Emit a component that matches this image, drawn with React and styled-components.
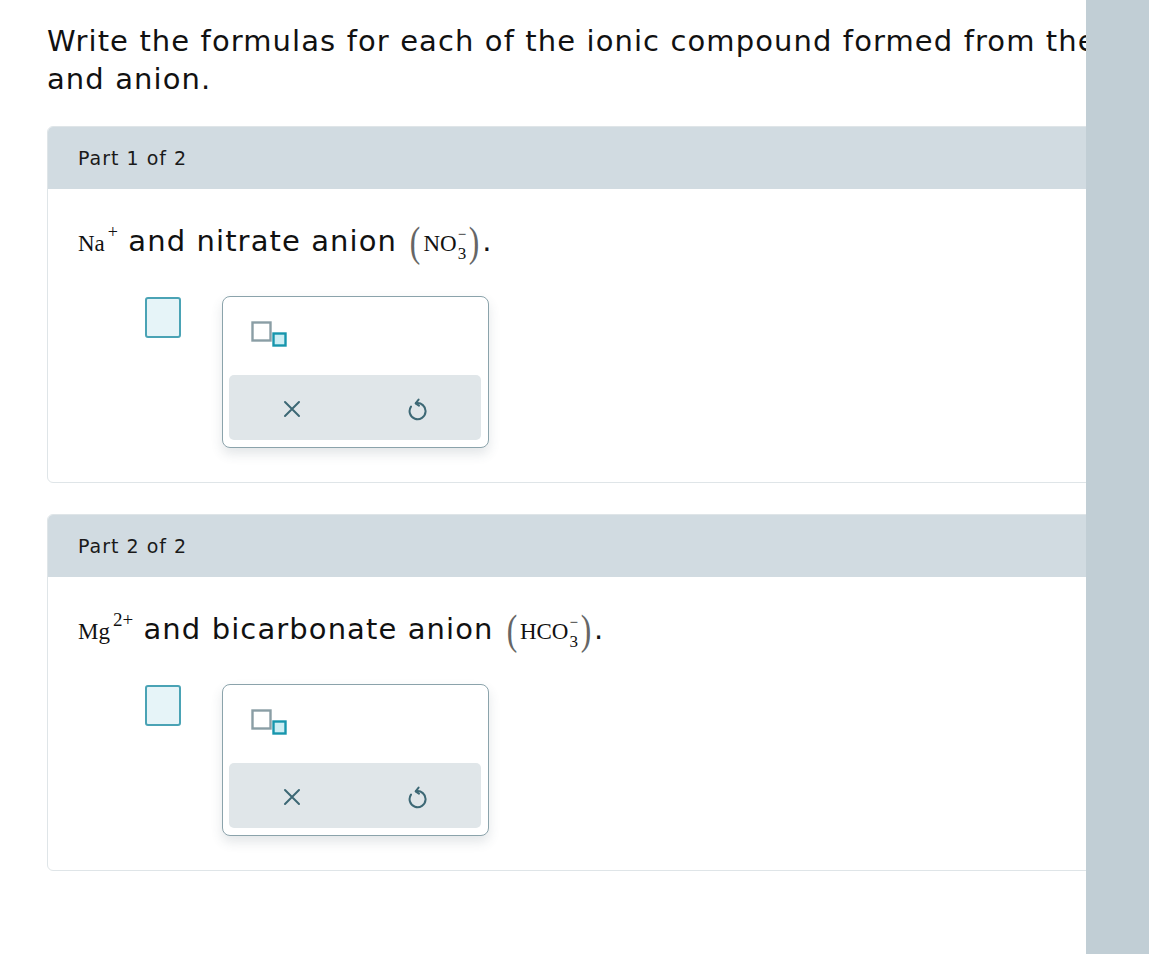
import styled, { createGlobalStyle } from "styled-components";

const GlobalStyle = createGlobalStyle`
    html, body {
        margin: 0;
        padding: 0;
        background: #fff;
    }
    body {
        font-family: "DejaVu Sans", Verdana, sans-serif;
        color: #111;
    }
`;

const parts = [
    { label: "Part 1 of 2", ion: "Na", charge: "+", name: "nitrate", formula: "NO" },
    { label: "Part 2 of 2", ion: "Mg", charge: "2+", name: "bicarbonate", formula: "HCO" },
];

function SubSquareIcon() {
    return (
        <svg width="37" height="27" viewBox="0 0 37 27">
            <rect x="1.5" y="1.5" width="18" height="18" fill="#fff" stroke="#8a9ea5" strokeWidth="2.4" />
            <rect x="22.5" y="12.5" width="12" height="12" fill="#cdeef4" stroke="#1796ad" strokeWidth="2.4" />
        </svg>
    );
}

function ClearIcon() {
    return (
        <svg width="20" height="20" viewBox="0 0 20 20">
            <path d="M3 3 L17 17 M17 3 L3 17" stroke="#3d6875" strokeWidth="2" strokeLinecap="round" />
        </svg>
    );
}

function UndoIcon() {
    return (
        <svg width="22" height="24" viewBox="0 0 22 24">
            <path d="M9 6.3 A8 8 0 1 1 4 9.6" fill="none" stroke="#3d6875" strokeWidth="2" strokeLinecap="round" />
            <path d="M11.6 2.6 L8.6 6.3 L12 8.6" fill="none" stroke="#3d6875" strokeWidth="2" strokeLinecap="round" strokeLinejoin="round" />
        </svg>
    );
}

function Part({ part }) {
    return (
        <Card>
            <CardHeader>{part.label}</CardHeader>
            <CardBody>
                <Question>
                    <Chem>{part.ion}</Chem>
                    <Charge $wide={part.charge.length > 1}>{part.charge}</Charge>
                    {" "}and {part.name} anion{" "}
                    <Paren>(</Paren>
                    <Chem>{part.formula}</Chem>
                    <Stack>
                        <StackSup>−</StackSup>
                        <StackSub>3</StackSub>
                    </Stack>
                    <Paren>)</Paren>.
                </Question>
                <AnswerRow>
                    <AnswerBox />
                    <Palette>
                        <PaletteTop>
                            <SubSquareIcon />
                        </PaletteTop>
                        <Toolbar>
                            <ToolButton><ClearIcon /></ToolButton>
                            <ToolButton><UndoIcon /></ToolButton>
                        </Toolbar>
                    </Palette>
                </AnswerRow>
            </CardBody>
        </Card>
    );
}

export default function App() {
    return (
        <Page>
            <GlobalStyle />
            <Main>
                <Title>
                    Write the formulas for each of the ionic compound formed from the cation and anion.
                </Title>
                {parts.map((p) => (
                    <Part key={p.label} part={p} />
                ))}
            </Main>
            <Side />
        </Page>
    );
}

const Page = styled.div`
    display: flex;
    height: 954px;
    overflow: hidden;
`;

const Main = styled.div`
    flex: 0 0 1086px;
    overflow: hidden;
    padding: 22px 0 0 47px;
    box-sizing: border-box;
`;

const Side = styled.div`
    flex: 1;
    background: #c1ced5;
`;

const Title = styled.div`
    width: 1190px;
    font-size: 29px;
    line-height: 38px;
    letter-spacing: 1.1px;
    color: #111;
    margin-bottom: 28px;
`;

const Card = styled.div`
    width: 1120px;
    border: 1px solid #dfe5e8;
    border-radius: 6px;
    margin-bottom: 31px;
    overflow: hidden;
`;

const CardHeader = styled.div`
    height: 62px;
    background: #d1dbe1;
    display: flex;
    align-items: center;
    padding-left: 30px;
    font-size: 19px;
    letter-spacing: 1px;
    color: #1a1a1a;
`;

const CardBody = styled.div`
    padding: 32px 30px 34px;
`;

const Question = styled.div`
    height: 38px;
    font-size: 29px;
    line-height: 38px;
    letter-spacing: 1.1px;
    white-space: nowrap;
`;

const Chem = styled.span`
    font-family: "Liberation Serif", "Times New Roman", serif;
    font-size: 23px;
    letter-spacing: 0;
`;

const Charge = styled.span`
    font-family: "Liberation Serif", "Times New Roman", serif;
    font-size: ${(p) => (p.$wide ? "19px" : "18px")};
    letter-spacing: 0;
    vertical-align: 13px;
    line-height: 1;
    margin-left: 3px;
`;

const Paren = styled.span`
    display: inline-block;
    font-family: "Liberation Serif", "Times New Roman", serif;
    font-size: 42px;
    line-height: 1;
    color: #666;
    letter-spacing: 0;
    vertical-align: -5px;
    transform: scaleX(0.75);
    margin: 0 1px;
`;

const Stack = styled.span`
    display: inline-flex;
    flex-direction: column;
    align-items: center;
    font-family: "Liberation Serif", "Times New Roman", serif;
    letter-spacing: 0;
    line-height: 1;
    vertical-align: 12px;
    margin-left: 1px;
`;

const StackSup = styled.span`
    font-size: 15px;
`;

const StackSub = styled.span`
    font-size: 17px;
    margin-top: 3px;
`;

const AnswerRow = styled.div`
    display: flex;
    align-items: flex-start;
    margin-top: 37px;
    padding-left: 67px;
`;

const AnswerBox = styled.div`
    width: 36px;
    height: 41px;
    box-sizing: border-box;
    border: 2px solid #4aa3b5;
    border-radius: 3px;
    background: #e6f4f8;
    margin-top: 1px;
`;

const Palette = styled.div`
    margin-left: 41px;
    width: 267px;
    height: 152px;
    box-sizing: border-box;
    border: 1.5px solid #8ba3ab;
    border-radius: 8px;
    background: #fff;
    padding: 0 7px 7px 6px;
    display: flex;
    flex-direction: column;
    box-shadow: 0 6px 12px rgba(60, 80, 90, 0.14);
`;

const PaletteTop = styled.div`
    height: 78px;
    display: flex;
    align-items: flex-start;
    padding: 24px 0 0 22px;
    box-sizing: border-box;
`;

const Toolbar = styled.div`
    flex: 1;
    background: #e0e6e9;
    border-radius: 5px;
    display: grid;
    grid-template-columns: 1fr 1fr;
`;

const ToolButton = styled.div`
    display: flex;
    align-items: center;
    justify-content: center;
    padding-top: 2px;
`;
